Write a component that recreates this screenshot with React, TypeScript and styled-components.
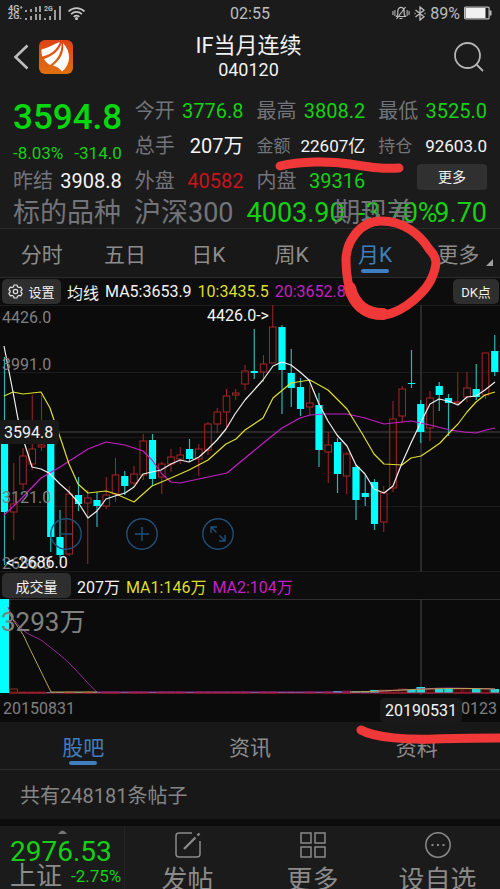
import React from "react";
import styled, { createGlobalStyle } from "styled-components";

const GREEN = "#16d016";
const CYAN = "#00ffff";
const RED = "#a32626";
const GREY = "#8a8a8a";
const BLUE = "#3f7fbf";
const YELLOW = "#dede2e";
const MAGENTA = "#c41fc4";
const MARKER = "#f03838";

const GlobalStyle = createGlobalStyle`
  * { box-sizing: border-box; }
  body {
    margin: 0;
    background: #1b1b1b;
    color: #f2f2f2;
    font-family: Roboto, "Noto Sans CJK SC", sans-serif;
  }
  button {
    font: inherit;
    color: inherit;
    background: none;
    border: 0;
    padding: 0;
    cursor: pointer;
  }
  a { color: inherit; text-decoration: none; }
  svg { display: block; }
`;

const Page = styled.div`
  position: relative;
  display: flex;
  flex-direction: column;
  min-height: 100vh;
  overflow: hidden;
`;

const StatusBar = styled.div`
  display: grid;
  grid-template-columns: 1fr auto 1fr;
  align-items: center;
  height: 26px;
  padding: 0 8px;
  font-size: 16px;
  color: #bdbdbd;
`;

const StatusGroup = styled.div<{ $end?: boolean }>`
  display: flex;
  align-items: center;
  gap: ${(p) => (p.$end ? 4 : 2)}px;
  justify-content: ${(p) => (p.$end ? "flex-end" : "flex-start")};
`;

const NetLabels = styled.span`
  display: grid;
  font-size: 9px;
  line-height: 7px;
  font-weight: 700;
`;

const Header = styled.header`
  display: grid;
  grid-template-columns: 1fr auto 1fr;
  align-items: center;
  height: 64px;
  padding: 0 16px 3px 13px;
`;

const HeaderSide = styled.div<{ $end?: boolean }>`
  display: flex;
  align-items: center;
  gap: 10px;
  justify-content: ${(p) => (p.$end ? "flex-end" : "flex-start")};
`;

const Title = styled.h1`
  margin: 0;
  text-align: center;
  font-size: 22px;
  line-height: 26px;
  font-weight: 400;
`;

const Code = styled.div`
  text-align: center;
  font-size: 18px;
  line-height: 22px;
`;

const Quote = styled.section`
  display: grid;
  grid-template-columns: repeat(4, minmax(0, 1fr));
  grid-template-rows: repeat(3, 35px) 29px;
  column-gap: 13px;
  height: 139px;
  padding: 4px 13px 0;
  border-bottom: 1px solid #2c2c2c;
`;

const Last = styled.div`
  grid-row: span 2;
  color: ${GREEN};
`;

const LastPrice = styled.div`
  color: #06d80f;
  font-size: 35px;
  line-height: 48px;
  font-weight: 500;
`;

const Change = styled.div`
  display: flex;
  justify-content: space-between;
  font-size: 17px;
  line-height: 22px;
`;

const Cell = styled.div<{ $small?: boolean }>`
  display: flex;
  align-items: center;
  justify-content: space-between;
  white-space: nowrap;
  font-size: ${(p) => (p.$small ? 17 : 20)}px;
  line-height: 35px;
`;

const Label = styled.span`
  color: #72747a;
`;

const Value = styled.span<{ $color?: string }>`
  color: ${(p) => p.$color ?? "#f5f5f5"};
`;

const MoreButton = styled.button`
  justify-self: end;
  width: 70px;
  height: 26px;
  border-radius: 4px;
  background: #303030;
  font-size: 14px;
  line-height: 24px;
`;

const Underlying = styled.div`
  grid-column: 1 / -1;
  display: grid;
  font-size: 27px;
  line-height: 29px;
  white-space: nowrap;
`;

const UnderlyingPart = styled.div<{ $end?: boolean }>`
  grid-area: 1 / 1;
  display: flex;
  gap: ${(p) => (p.$end ? 20 : 13)}px;
  justify-self: ${(p) => (p.$end ? "end" : "start")};
`;

const Tabs = styled.nav<{ $count: number; $height: number }>`
  display: grid;
  grid-template-columns: repeat(${(p) => p.$count}, 1fr);
  height: ${(p) => p.$height}px;
  background: #181818;
  border-bottom: 1px solid #2c2c2c;
`;

const Tab = styled.button<{ $active?: boolean }>`
  position: relative;
  font-size: 21px;
  color: ${(p) => (p.$active ? BLUE : "#8c8c8c")};
  &::after {
    content: "";
    position: absolute;
    left: calc(50% - 14px);
    bottom: 4px;
    width: 28px;
    height: 4px;
    border-radius: 2px;
    background: ${(p) => (p.$active ? BLUE : "transparent")};
  }
`;

const Corner = styled.svg`
  position: absolute;
  right: 7px;
  bottom: 11px;
`;

const Legend = styled.div`
  display: flex;
  align-items: center;
  gap: 6px;
  height: 27px;
  padding: 0 1px 0 2px;
  background: #0d0d0d;
  font-size: 16px;
  white-space: nowrap;
`;

const LegendButton = styled.button<{ $width: number; $end?: boolean; $size: number }>`
  display: flex;
  align-items: center;
  justify-content: center;
  gap: 5px;
  width: ${(p) => p.$width}px;
  height: 25px;
  margin-left: ${(p) => (p.$end ? "auto" : "0")};
  border-radius: 5px;
  background: #2e2e2e;
  font-size: ${(p) => p.$size}px;
`;

const LegendText = styled.span<{ $color?: string }>`
  color: ${(p) => p.$color ?? "#f2f2f2"};
`;

const Chart = styled.section`
  position: relative;
  background: #0b0b0b;
  svg.plot { width: 100%; height: auto; }
`;

const ChartLabel = styled.span<{ $x: number; $y: number; $white?: boolean; $size?: number }>`
  position: absolute;
  left: ${(p) => p.$x / 5}%;
  top: ${(p) => p.$y}px;
  font-size: ${(p) => p.$size ?? 16}px;
  line-height: 20px;
  color: ${(p) => (p.$white ? "#f5f5f5" : "#808080")};
`;

const PriceTag = styled.span`
  position: absolute;
  left: 0;
  top: 115px;
  width: 59px;
  height: 24px;
  padding-left: 4px;
  border-radius: 0 4px 4px 0;
  background: #191919;
  font-size: 16px;
  line-height: 26px;
`;

const Tools = styled.div`
  position: absolute;
  left: 10%;
  top: 213px;
  display: flex;
  gap: 44px;
`;

const Dates = styled.div`
  position: relative;
  display: flex;
  justify-content: space-between;
  height: 27px;
  padding: 0 3px;
  background: #0b0b0b;
  color: #808080;
  font-size: 16px;
  line-height: 28px;
`;

const DateTag = styled.span`
  position: absolute;
  left: 76%;
  top: 3px;
  width: 82px;
  height: 24px;
  border-radius: 4px;
  background: #191919;
  color: #f5f5f5;
  line-height: 26px;
  text-align: center;
`;

const Posts = styled.p`
  margin: 0;
  height: 49px;
  padding-left: 20px;
  background: #181818;
  color: #868686;
  font-size: 20px;
  line-height: 52px;
`;

const BottomBar = styled.footer`
  display: grid;
  grid-template-columns: repeat(4, 1fr);
  height: 70px;
  border-top: 7px solid #0c0c0c;
  overflow: hidden;
`;

const IndexBox = styled.button`
  position: relative;
  display: flex;
  flex-direction: column;
  align-items: flex-start;
  padding: 12px 2px 0 10px;
  border-right: 1px solid #232323;
  font-size: 28px;
  line-height: 28px;
  text-align: left;
  color: ${GREEN};
`;

const IndexRow = styled.span`
  display: flex;
  gap: 9px;
  font-size: 17px;
  line-height: 20px;
`;

const IndexName = styled.span`
  color: ${GREY};
  font-size: 26px;
`;

const UpMark = styled.svg`
  position: absolute;
  left: 58px;
  top: 4px;
`;

const Action = styled.button`
  display: flex;
  flex-direction: column;
  align-items: center;
  padding-top: 6px;
  gap: 3px;
  color: ${GREY};
  font-size: 26px;
  line-height: 38px;
  white-space: nowrap;
`;

const Marks = styled.svg`
  position: absolute;
  left: 0;
  top: 0;
  width: 100%;
  height: auto;
  pointer-events: none;
`;

/* direction (1 = up), high, body top, body bottom, low; in plot units */
type Candle = [number, number, number, number, number];
const candles: Candle[] = [
  [0, 52, 125, 207, 260], [1, 158, 199, 207, 235], [1, 143, 151, 179, 185], [1, 90, 144, 159, 165],
  [1, 90, 140, 142, 146], [0, 125, 135, 232, 247], [0, 205, 232, 250, 253], [1, 181, 189, 249, 251],
  [0, 172, 190, 199, 206], [1, 185, 193, 198, 259], [0, 187, 195, 201, 222], [1, 172, 190, 201, 204],
  [1, 153, 170, 189, 197], [0, 166, 171, 181, 190], [1, 161, 169, 178, 182], [1, 129, 136, 170, 175],
  [0, 129, 135, 174, 181], [1, 157, 159, 172, 189], [1, 144, 152, 159, 167], [1, 142, 150, 154, 159],
  [0, 134, 144, 154, 157], [1, 139, 144, 154, 171], [1, 117, 119, 145, 150], [1, 103, 107, 119, 128],
  [1, 84, 91, 107, 122], [1, 84, 88, 90, 95], [1, 60, 66, 79, 85], [0, 24, 66, 68, 74],
  [1, 50, 59, 67, 77], [1, 0, 22, 58, 58], [0, 20, 22, 65, 109], [0, 44, 68, 83, 102],
  [0, 73, 82, 104, 111], [1, 80, 98, 102, 110], [0, 88, 100, 145, 162], [1, 127, 140, 147, 178],
  [0, 133, 137, 169, 188], [1, 147, 149, 171, 189], [0, 160, 162, 195, 215], [0, 170, 188, 192, 201],
  [0, 174, 177, 219, 225], [1, 181, 188, 217, 227], [1, 96, 114, 183, 187], [1, 81, 84, 111, 118],
  [0, 45, 78, 79, 83], [0, 95, 99, 127, 138], [1, 86, 93, 123, 136], [0, 77, 81, 90, 106],
  [0, 89, 93, 98, 131], [1, 67, 97, 98, 99], [1, 67, 83, 92, 97], [0, 59, 84, 92, 95],
  [1, 48, 48, 90, 94], [0, 30, 46, 67, 71],
];
const xOf = (i: number) => 4.5 + i * 9.25;

const ma5 =
  "4,41 13,87 18,114 25,140 32,162 41,164 49,168 60,179 69,187 78,197 88,213 97,206 106,194 115,191 125,188 134,182 143,169 152,167 161,165 171,159 180,155 189,157 199,152 208,144 217,135 226,124 235,109 245,95 263,75 273,61 282,57 291,60 300,67 309,75 319,99 328,116 337,130 347,141 356,160 365,169 374,184 384,188 393,181 402,158 411,138 421,117 430,99 439,94 448,96 458,100 467,92 476,91 485,85 495,77";
const ma10 =
  "4,91 13,87 23,89 41,87 50,103 54,115 60,132 69,159 78,179 88,188 106,186 116,189 134,197 152,181 171,173 189,165 208,155 226,139 236,134 245,125 263,113 273,93 291,78 310,75 328,85 347,104 363,130 374,149 384,159 402,160 411,153 421,151 430,145 440,138 451,126 458,119 467,107 476,97 485,90 495,87";
const ma20 =
  "4,210 20,195 41,173 60,162 88,144 106,137 125,140 143,146 152,155 162,169 171,177 180,178 208,172 227,168 250,149 272,131 282,123 300,113 310,110 325,109 347,109 365,113 384,119 411,116 430,120 450,125 464,127 476,128 486,125 495,123";

function PricePlot() {
  return (
    <svg className="plot" viewBox="0 0 500 267" aria-label="月K走势">
      <g stroke="#1c1c1c">
        <path d="M0 .5H500M0 67.5H500M0 201.5H500M0 266.5H500M0 132.5H500" />
      </g>
      <path d="M0 127H500M421 0V267" stroke="#343434" strokeWidth="1.5" />
      {candles.map(([up, high, top, bottom, low], i) => {
        const x = xOf(i);
        return up ? (
          <g key={i} stroke={RED} fill="none">
            <path d={`M${x} ${high}V${top}M${x} ${bottom}V${low}`} />
            <rect x={x - 3.3} y={top} width={6.6} height={bottom - top} />
          </g>
        ) : (
          <g key={i} fill={CYAN}>
            <path d={`M${x} ${high}V${low}`} stroke="#28b5b5" strokeWidth="1.2" />
            <rect x={x - 3.6} y={top} width={7.2} height={bottom - top} />
          </g>
        );
      })}
      <g fill="none" strokeWidth="1.2" strokeLinejoin="round">
        <polyline points={ma20} stroke={MAGENTA} />
        <polyline points={ma10} stroke={YELLOW} />
        <polyline points={ma5} stroke="#f0f0f0" />
      </g>
    </svg>
  );
}

const volumes = candles.map(([up], i) => ({
  up,
  height: i < 36 ? 1 : i < 40 ? 2 : i < 43 ? 3 : i === 45 ? 6 : 4,
}));

function VolumePlot() {
  return (
    <svg className="plot" viewBox="0 0 500 96" aria-label="成交量">
      <path d="M0 .5H500" stroke="#303030" />
      <path d="M421 0V96" stroke="#343434" strokeWidth="1.5" />
      <rect width="9" height="94" fill={CYAN} />
      <rect x="9.5" y="90" width="8" height="4" fill="none" stroke={RED} />
      {volumes.slice(1).map((v, n) => {
        const x = xOf(n + 1);
        return v.up ? (
          <rect key={n} x={x - 4} y={94 - v.height} width={8} height={v.height} fill="#3a0c10" stroke="#9c2020" strokeWidth=".7" />
        ) : (
          <rect key={n} x={x - 4.3} y={94 - v.height} width={8.6} height={v.height} fill="#22dada" />
        );
      })}
      <path d="M18 94H500" stroke="#b52040" strokeWidth="1.2" />
      <path d="M8 8L13 20L24 32C34 39 38 38 45 44C55 52 63 58 70 65C80 75 90 87 97 93H350C390 93 420 89 450 89L495 90" fill="none" stroke="#9a2a9a" />
      <path d="M8 12C15 26 22 31 27 44L51 93H97M350 93C400 92 430 88 495 90" fill="none" stroke="#b3a654" />
    </svg>
  );
}

function ToolIcon({ d }: { d: string }) {
  return (
    <svg width="32" height="32" viewBox="0 0 32 32" fill="none" stroke="#215078" strokeWidth="1.4">
      <circle cx="16" cy="16" r="15.2" />
      <path d={d} />
    </svg>
  );
}

function Bars({ split }: { split?: boolean }) {
  return (
    <svg width="17" height="14" viewBox="0 0 17 14" stroke="#bdbdbd" strokeWidth="1.6">
      {split ? (
        <path d="M1 12v2M6 10v4M11 4v10M16 0v14" />
      ) : (
        <path d="M1 4v2M6 3v3M11 1v5M15 0v6M1 12v2M6 10v4M11 8v6M15 8v6" />
      )}
    </svg>
  );
}

const SecondSim = styled.span`
  position: relative;
  display: block;
`;

const SimLabel = styled.span`
  position: absolute;
  left: 0;
  top: 0;
  font-size: 7px;
  line-height: 6px;
  font-weight: 700;
`;

export default function App() {
  return (
    <>
      <GlobalStyle />
      <Page>
        <StatusBar>
          <StatusGroup>
            <NetLabels>
              <span>4G⁺</span>
              <span>2G.</span>
            </NetLabels>
            <Bars />
            <SecondSim>
              <Bars split />
              <SimLabel>2G</SimLabel>
            </SecondSim>
            <svg width="22" height="13" viewBox="-3 0 19 13" fill="none" stroke="#c4c4c4" strokeWidth="1.7">
              <path d="M1 4.5C5.500 0 12.500 0 17 4.500M3.600 7.200C6.700 4.200 11.300 4.200 14.400 7.200M6.200 9.800C7.900 8.300 10.100 8.300 11.800 9.800" />
              <circle cx="9" cy="11.600" r=".7" />
            </svg>
          </StatusGroup>
          <span>02:55</span>
          <StatusGroup $end>
            <svg width="18" height="14" viewBox="0 0 18 14" fill="none" stroke="#bdbdbd" strokeWidth="1.2">
              <path d="M4.500 10.500H13.500L12.200 8.500V5.500C12.200 0 5.800 0 5.800 5.500V8.500ZM7.500 12.500h3M13.500 1L4.500 13" />
              <path d="M2.800 4v6M.8 5v4M15.200 4v6M17.200 5v4" stroke="#7d7d7d" strokeWidth="1.800" />
            </svg>
            <svg width="12" height="15" viewBox="0 0 12 15" fill="none" stroke="#bdbdbd" strokeWidth="1.3">
              <path d="M1.500 4L10 10.800L6 14V1L10 4.200L1.500 11M.5 7.500h1M10.500 7.500h1" />
            </svg>
            <span>89%</span>
            <svg width="28" height="14" viewBox="0 0 28 14">
              <rect x=".6" y="1.100" width="24.500" height="11.800" rx="1" fill="none" stroke="#bdbdbd" strokeWidth="1.200" />
              <rect x="1.500" y="2" width="20" height="10" fill="#f0f0f0" />
              <path d="M26.500 4.500v5" stroke="#bdbdbd" strokeWidth="2" />
            </svg>
          </StatusGroup>
        </StatusBar>

        <Header>
          <HeaderSide>
            <button aria-label="返回">
              <svg width="16" height="26" viewBox="0 0 16 26" fill="none" stroke="#bdbdbd" strokeWidth="2.600">
                <path d="M14.500 1.500L2.500 13L14.500 24.500" />
              </svg>
            </button>
            <svg width="34" height="34" viewBox="0 0 34 34" aria-label="logo">
              <defs>
                <linearGradient id="logo" x2="0" y2="1">
                  <stop stopColor="#dd4316" />
                  <stop offset="1" stopColor="#e0700f" />
                </linearGradient>
              </defs>
              <rect width="34" height="34" rx="6" fill="url(#logo)" />
              <g fill="#fff">
                <path d="M21 2C15 4 9 8 2.500 9.500C2.200 12 2.500 14 3.500 16.500C12 14.500 18.500 9 21 2Z" />
                <path d="M22.500 3C20.500 10.500 14 16 5 19C6.500 21.500 8.500 23.500 11 25C18.500 20 23 12.500 22.500 3Z" />
                <path d="M24 3C25.500 11.500 21.500 20 14 25.500C18 26.500 21 28.500 23 31.500C32 24.500 32.500 12 24 3Z" />
              </g>
            </svg>
          </HeaderSide>
          <div>
            <Title>IF当月连续</Title>
            <Code>040120</Code>
          </div>
          <HeaderSide $end>
            <button aria-label="搜索">
              <svg width="30" height="30" viewBox="0 0 30 30" fill="none" stroke="#b5b5b5" strokeWidth="1.800">
                <circle cx="13.500" cy="13.500" r="12.500" />
                <path d="M22 22L29 29" />
              </svg>
            </button>
          </HeaderSide>
        </Header>

        <Quote>
          <Last>
            <LastPrice>3594.8</LastPrice>
            <Change>
              <span>-8.03%</span>
              <span>-314.0</span>
            </Change>
          </Last>
          <Cell><Label>今开</Label><Value $color={GREEN}>3776.8</Value></Cell>
          <Cell><Label>最高</Label><Value $color={GREEN}>3808.2</Value></Cell>
          <Cell><Label>最低</Label><Value $color={GREEN}>3525.0</Value></Cell>
          <Cell><Label>总手</Label><Value>207万</Value></Cell>
          <Cell $small><Label>金额</Label><Value>22607亿</Value></Cell>
          <Cell $small><Label>持仓</Label><Value>92603.0</Value></Cell>
          <Cell><Label>昨结</Label><Value>3908.8</Value></Cell>
          <Cell><Label>外盘</Label><Value $color="#c8141c">40582</Value></Cell>
          <Cell><Label>内盘</Label><Value $color={GREEN}>39316</Value></Cell>
          <MoreButton>更多</MoreButton>
          <Underlying>
            <UnderlyingPart>
              <Label>标的品种</Label>
              <Label>沪深300</Label>
              <Value $color={GREEN}>4003.90</Value>
              <Value $color={GREEN}>-3.70%</Value>
            </UnderlyingPart>
            <UnderlyingPart $end>
              <Label>期现差</Label>
              <Value $color={GREEN}>9.70</Value>
            </UnderlyingPart>
          </Underlying>
        </Quote>

        <Tabs $count={6} $height={49}>
          <Tab>分时</Tab>
          <Tab>五日</Tab>
          <Tab>日K</Tab>
          <Tab>周K</Tab>
          <Tab $active>月K</Tab>
          <Tab>
            更多
            <Corner width="7" height="7" viewBox="0 0 7 7"><path d="M7 0V7H0Z" fill="#a0a0a0" /></Corner>
          </Tab>
        </Tabs>

        <Legend>
          <LegendButton $width={59} $size={13}>
            <svg width="15" height="15" viewBox="0 0 15 15" fill="none" stroke="#e0e0e0" strokeWidth="1.200" strokeLinejoin="round">
              <path d="M6 1h3l.5 1.800 1.300.8 1.900-.5 1.500 2.600L12.900 7v1l1.300 1.300-1.500 2.600-1.900-.5-1.300.8L9 14H6l-.5-1.800-1.300-.8-1.900.5L.8 9.300 2.100 8V7L.8 5.700l1.500-2.600 1.900.5 1.300-.8Z" />
              <circle cx="7.500" cy="7.500" r="2.200" />
            </svg>
            设置
          </LegendButton>
          <LegendText>均线</LegendText>
          <LegendText>MA5:3653.9</LegendText>
          <LegendText $color={YELLOW}>10:3435.5</LegendText>
          <LegendText $color={MAGENTA}>20:3652.8</LegendText>
          <LegendButton $width={46} $size={13} $end>DK点</LegendButton>
        </Legend>

        <Chart>
          <ChartLabel $x={2} $y={3}>4426.0</ChartLabel>
          <ChartLabel $x={2} $y={50}>3991.0</ChartLabel>
          <ChartLabel $x={2} $y={183}>3121.0</ChartLabel>
          <ChartLabel $x={2} $y={249}>2686.0</ChartLabel>
          <PricePlot />
          <ChartLabel $x={207} $y={1} $white>4426.0-&gt;</ChartLabel>
          <ChartLabel $x={6} $y={248} $white>&lt;-2686.0</ChartLabel>
          <PriceTag>3594.8</PriceTag>
          <Tools>
            <button aria-label="缩小"><ToolIcon d="M10 16H22" /></button>
            <button aria-label="放大"><ToolIcon d="M9 16H23M16 9V23" /></button>
            <button aria-label="全屏"><ToolIcon d="M9 15V9H15M9 9L14.500 14.500M23 17V23H17M23 23L17.500 17.500" /></button>
          </Tools>
        </Chart>

        <Legend>
          <LegendButton $width={69} $size={14}>成交量</LegendButton>
          <LegendText>207万</LegendText>
          <LegendText $color={YELLOW}>MA1:146万</LegendText>
          <LegendText $color={MAGENTA}>MA2:104万</LegendText>
        </Legend>

        <Chart>
          <VolumePlot />
          <ChartLabel $x={1} $y={13} $size={26}>3293万</ChartLabel>
        </Chart>

        <Dates>
          <span>20150831</span>
          <span>20200123</span>
          <DateTag>20190531</DateTag>
        </Dates>

        <Tabs $count={3} $height={48}>
          <Tab $active>股吧</Tab>
          <Tab>资讯</Tab>
          <Tab>资料</Tab>
        </Tabs>

        <Posts>共有248181条帖子</Posts>

        <BottomBar>
          <IndexBox>
            <UpMark width="9" height="4" viewBox="0 0 9 4"><path d="M0 4Q4.500-3 9 4Z" fill="#777" /></UpMark>
            2976.53
            <IndexRow>
              <IndexName>上证</IndexName>
              <span>-2.75%</span>
            </IndexRow>
          </IndexBox>
          <Action>
            <svg width="26" height="26" viewBox="0 0 26 26" fill="none" stroke={GREY} strokeWidth="1.500">
              <path d="M17 1H4Q1 1 1 4V22Q1 25 4 25H22Q25 25 25 22V9" />
              <path d="M9 17L20.500 5.500M22.500 3.500L24.500 1.500" strokeWidth="2.400" />
            </svg>
            发帖
          </Action>
          <Action>
            <svg width="26" height="26" viewBox="0 0 26 26" fill="none" stroke={GREY} strokeWidth="1.500">
              <path d="M1 1h10v10H1ZM15 1h10v10H15ZM1 15h10v10H1ZM15 15h10v10H15Z" />
            </svg>
            更多
          </Action>
          <Action>
            <svg width="26" height="26" viewBox="0 0 26 26" fill="none" stroke={GREY} strokeWidth="1.500">
              <circle cx="13" cy="13" r="12.200" />
              <path d="M6.500 13h2M12 13h2M17.500 13h2" strokeWidth="2" />
            </svg>
            设自选
          </Action>
        </BottomBar>

        <Marks viewBox="0 0 500 889" fill="none" stroke={MARKER} strokeWidth="9" strokeLinecap="round" strokeLinejoin="round" aria-hidden="true">
          <path d="M280 166C300 161 330 161 350 164S380 169 399 168" />
          <path d="M384 315C405 312 428 290 433 275C437 264 438 258 429 249C421 236 405 221 381 221C359 221 346 243 346 260C346 278 349 290 354 299C360 310 370 316 384 315" />
          <path d="M350 288C354 303 364 314 383 314" strokeWidth="12" />
          <path d="M361 730C375 738 410 740 435 739S480 738 504 738" />
        </Marks>
      </Page>
    </>
  );
}
